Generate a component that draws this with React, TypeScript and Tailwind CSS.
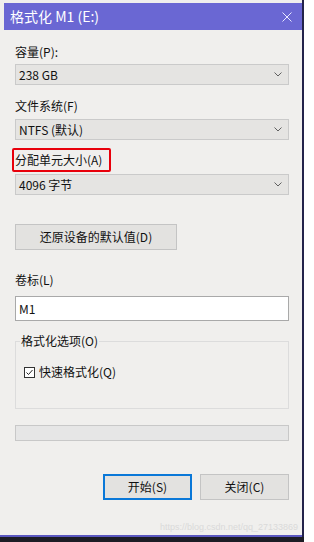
import React from "react";

const FONT = '"Segoe UI", "Noto Sans CJK SC", "Noto Sans", sans-serif';

function Chevron() {
  return (
    <svg width="8" height="5" viewBox="0 0 8 5" className="text-[#606060]">
      <path d="M0.5 0.5 L4 4 L7.5 0.5" fill="none" stroke="currentColor" strokeWidth="1" />
    </svg>
  );
}

function Select({ value }: { value: string }) {
  return (
    <div className="flex h-[21px] items-center justify-between border border-[#cacaca] bg-[#e5e4e2] pl-[3px] pr-[6px] text-[12px] text-[#111]">
      <span>{value}</span>
      <Chevron />
    </div>
  );
}

function Label({ children }: { children: React.ReactNode }) {
  return <div className="h-[16px] text-[12px] leading-[16px] text-[#111]">{children}</div>;
}

export default function App() {
  return (
    <div className="h-[542px] w-[314px] bg-white" style={{ fontFamily: FONT }}>
      <div className="flex h-[537px] w-[304px] flex-col border-r-2 border-[#23234a] bg-[#f0efed] pt-[3px]">
        {/* title bar */}
        <div className="ml-[4px] flex h-[27px] items-center justify-between bg-[#6a67d3] pl-[6px] pr-[10px] text-white">
          <span className="text-[14px]">格式化 M1 (E:)</span>
          <svg width="10" height="10" viewBox="0 0 10 10">
            <path d="M0.5 0.5 L9.5 9.5 M9.5 0.5 L0.5 9.5" stroke="#e8e8ff" strokeWidth="1" />
          </svg>
        </div>

        <div className="flex flex-1 flex-col pl-[15px] pr-[13px] pt-[14px]">
          <Label>容量(P):</Label>
          <div className="mt-[4px]">
            <Select value="238 GB" />
          </div>

          <div className="mt-[13px]">
            <Label>文件系统(F)</Label>
          </div>
          <div className="mt-[5px]">
            <Select value="NTFS (默认)" />
          </div>

          <div className="relative mt-[12px]">
            <Label>分配单元大小(A)</Label>
            {/* red annotation box */}
            <span className="pointer-events-none absolute -left-[3px] -top-[4px] h-[24px] w-[99px] rounded-[2px] border-2 border-[#e8000b]" />
          </div>
          <div className="mt-[6px]">
            <Select value="4096 字节" />
          </div>

          <button className="mt-[29px] flex h-[26px] w-[162px] items-center justify-center border border-[#c4c4c4] bg-[#e3e2e0] text-[12px] text-[#111]">
            还原设备的默认值(D)
          </button>

          <div className="mt-[22px]">
            <Label>卷标(L)</Label>
          </div>
          <div className="mt-[8px] flex h-[25px] items-center border border-[#a9a9a9] bg-white pl-[3px] text-[12px] text-[#111]">
            M1
          </div>

          <div className="relative mt-[20px] h-[68px] border border-[#dcdcdc]">
            <span className="absolute -top-[9px] left-[4px] bg-[#f0efed] px-[1px] text-[12px] leading-[16px] text-[#111]">
              格式化选项(O)
            </span>
            <div className="ml-[8px] mt-[21px] flex items-center gap-[4px] text-[12px] text-[#111]">
              <span className="flex h-[11px] w-[11px] items-center justify-center border border-[#333] bg-white">
                <svg width="9" height="9" viewBox="0 0 9 9">
                  <path d="M1.5 4.5 L3.5 6.5 L7.5 2" fill="none" stroke="#222" strokeWidth="1" />
                </svg>
              </span>
              <span>快速格式化(Q)</span>
            </div>
          </div>

          <div className="mt-[16px] h-[16px] border border-[#c8c8c8] bg-[#e6e6e6]" />

          <div className="mt-[33px] flex justify-end gap-[8px]">
            <button className="flex h-[26px] w-[89px] items-center justify-center border-2 border-[#0a78d8] bg-[#e3e2e0] text-[12px] text-[#111]">
              开始(S)
            </button>
            <button className="flex h-[26px] w-[89px] items-center justify-center border border-[#c4c4c4] bg-[#e3e2e0] text-[12px] text-[#111]">
              关闭(C)
            </button>
          </div>

          <div className="mt-[21px] flex justify-end text-[9px] leading-[12px] text-[#dadada]">
            <span className="-mr-[9px] font-['Liberation_Sans',sans-serif]">https://blog.csdn.net/qq_27133869</span>
          </div>
        </div>
        <div className="h-[2px] bg-[#5a57c0]" />
      </div>
      <div className="h-[5px] w-[304px] bg-[#1c1c24]" />
    </div>
  );
}
